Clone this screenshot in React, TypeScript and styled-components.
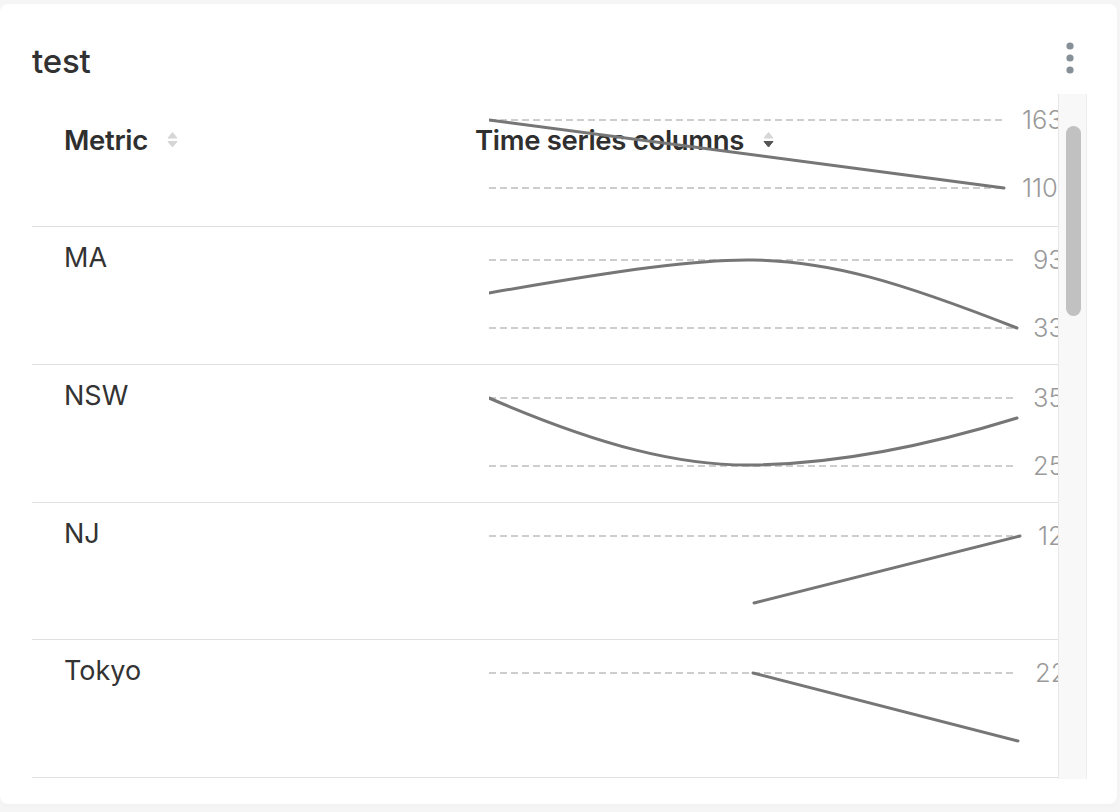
import React from "react";
import styled, { createGlobalStyle } from "styled-components";

const Global = createGlobalStyle`
  html, body { margin: 0; padding: 0; background: #f5f5f5; }
  body { font-family: Inter, "Noto Sans", sans-serif; color: #333; }
  * { box-sizing: border-box; }
`;

const Page = styled.div`
  padding-top: 4px;
  width: 1120px;
  height: 812px;
`;

const Card = styled.div`
  width: 1117px;
  height: 800px;
  background: #fff;
  border-radius: 8px;
  box-shadow: 0 2px 6px rgba(0, 0, 0, 0.02);
  display: flex;
  flex-direction: column;
  padding: 0 30px 25px 32px;
`;

const TitleBar = styled.div`
  height: 83px;
  display: flex;
  align-items: center;
  justify-content: space-between;
  padding-top: 30px;
`;

const Title = styled.div`
  font-family: Inter, sans-serif;
  font-size: 33px;
  font-weight: 500;
  color: #323232;
  letter-spacing: -0.2px;
`;

const Kebab = styled.button`
  border: 0;
  background: transparent;
  padding: 0;
  margin-right: 12px;
  margin-top: -5px;
  display: flex;
  cursor: pointer;
`;

const Body = styled.div`
  flex: 1;
  display: flex;
  min-height: 0;
`;

const Table = styled.div`
  flex: 1;
  display: flex;
  flex-direction: column;
  overflow: hidden;
`;

const Row = styled.div<{ $height: number }>`
  display: grid;
  grid-template-columns: 428px 1fr;
  height: ${(p) => p.$height}px;
  border-bottom: 1px solid #e0e0e0;
  overflow: hidden;
`;

const HeadCell = styled.div`
  display: flex;
  align-items: center;
  gap: 19px;
  font-family: Inter, sans-serif;
  font-size: 27.5px;
  font-weight: 600;
  color: #2f2f2f;
  letter-spacing: -0.3px;
  padding: 33px 0 0 32px;
  align-self: start;
  height: 40px;
  box-sizing: content-box;
`;

const Stack = styled.div`
  display: grid;
  overflow: hidden;
  & > * {
    grid-area: 1 / 1;
  }
`;

const HeadLabel = styled(HeadCell)`
  padding-left: 15px;
`;

const ChartBox = styled.div`
  padding-left: 29px;
  display: flex;
  align-items: flex-start;
  overflow: hidden;
`;

const Cell = styled.div`
  font-family: Inter, sans-serif;
  font-size: 27px;
  font-weight: 400;
  color: #333;
  padding: 13px 0 0 32px;
  line-height: 36px;
`;

const Track = styled.div`
  width: 29px;
  margin-top: 7px;
  background: #f8f8f8;
  border-left: 1px solid #e8e8e8;
  border-right: 1px solid #ededed;
  padding: 32px 0 0 7px;
`;

const Thumb = styled.div`
  width: 15px;
  height: 190px;
  border-radius: 8px;
  background: #c1c1c1;
`;

const SortIcon = ({ active }: { active?: "asc" | "desc" }) => (
  <svg width="11" height="16" viewBox="0 0 11 16">
    <path
      d="M5.5 0.5 L10 6 L1 6 Z"
      fill={active === "asc" ? "#555" : "#d6d6d6"}
      stroke={active === "asc" ? "#555" : "#d6d6d6"}
      strokeLinejoin="round"
      strokeWidth="1"
    />
    <path
      d="M1 9.5 L10 9.5 L5.5 15 Z"
      fill={active === "desc" ? "#555" : "#d6d6d6"}
      stroke={active === "desc" ? "#555" : "#d6d6d6"}
      strokeLinejoin="round"
      strokeWidth="1"
    />
  </svg>
);

const KebabIcon = () => (
  <svg width="10" height="34" viewBox="0 0 10 34">
    <circle cx="5" cy="5" r="3.6" fill="#879096" />
    <circle cx="5" cy="17" r="3.6" fill="#879096" />
    <circle cx="5" cy="29" r="3.6" fill="#879096" />
  </svg>
);

type Spark = {
  path: string;
  dashEnd: number;
  labelX: number;
  top: string;
  bottom?: string;
};

const Label = ({ x, y, children }: { x: number; y: number; children: string }) => (
  <text x={x} y={y} fontFamily="Inter, sans-serif" fontWeight="300" fontSize="25.5" fill="#9a9a9a">
    {children}
  </text>
);

const Sparkline = ({ s }: { s: Spark }) => (
  <svg width="569" height="137" viewBox="0 0 569 137">
    <line x1="0" y1="33" x2={s.dashEnd} y2="33" stroke="#bdbdbd" strokeWidth="1.5" strokeDasharray="7 4" />
    {s.bottom !== undefined && (
      <line x1="0" y1="101" x2={s.dashEnd} y2="101" stroke="#bdbdbd" strokeWidth="1.5" strokeDasharray="7 4" />
    )}
    <path d={s.path} fill="none" stroke="#767676" strokeWidth="3" strokeLinecap="round" />
    <Label x={s.labelX} y={42}>{s.top}</Label>
    {s.bottom !== undefined && <Label x={s.labelX} y={110}>{s.bottom}</Label>}
  </svg>
);

const headerSpark: Spark = {
  path: "M0,33 L515,101",
  dashEnd: 515,
  labelX: 533,
  top: "163",
  bottom: "110",
};

const rows: { name: string; spark: Spark }[] = [
  {
    name: "MA",
    spark: {
      path: "M0,66 C131,43 211,32 264,33 C341,34 411,55 528,101",
      dashEnd: 525,
      labelX: 544,
      top: "93",
      bottom: "33",
    },
  },
  {
    name: "NSW",
    spark: {
      path: "M0,33 C111,81 191,101 264,100 C341,99 431,83 528,53",
      dashEnd: 525,
      labelX: 544,
      top: "35",
      bottom: "25",
    },
  },
  {
    name: "NJ",
    spark: { path: "M265,100 L531,33", dashEnd: 525, labelX: 549, top: "12" },
  },
  {
    name: "Tokyo",
    spark: { path: "M264,33 L529,101", dashEnd: 525, labelX: 546, top: "22" },
  },
];

export default function App() {
  return (
    <>
      <Global />
      <Page>
        <Card>
          <TitleBar>
            <Title>test</Title>
            <Kebab aria-label="More options">
              <KebabIcon />
            </Kebab>
          </TitleBar>
          <Body>
            <Table>
              <Row $height={140}>
                <HeadCell>
                  Metric
                  <SortIcon />
                </HeadCell>
                <Stack>
                  <HeadLabel>
                    Time series columns
                    <SortIcon active="desc" />
                  </HeadLabel>
                  <ChartBox>
                    <Sparkline s={headerSpark} />
                  </ChartBox>
                </Stack>
              </Row>
              {rows.map((r) => (
                <Row key={r.name} $height={137.75}>
                  <Cell>{r.name}</Cell>
                  <ChartBox>
                    <Sparkline s={r.spark} />
                  </ChartBox>
                </Row>
              ))}
            </Table>
            <Track>
              <Thumb />
            </Track>
          </Body>
        </Card>
      </Page>
    </>
  );
}
